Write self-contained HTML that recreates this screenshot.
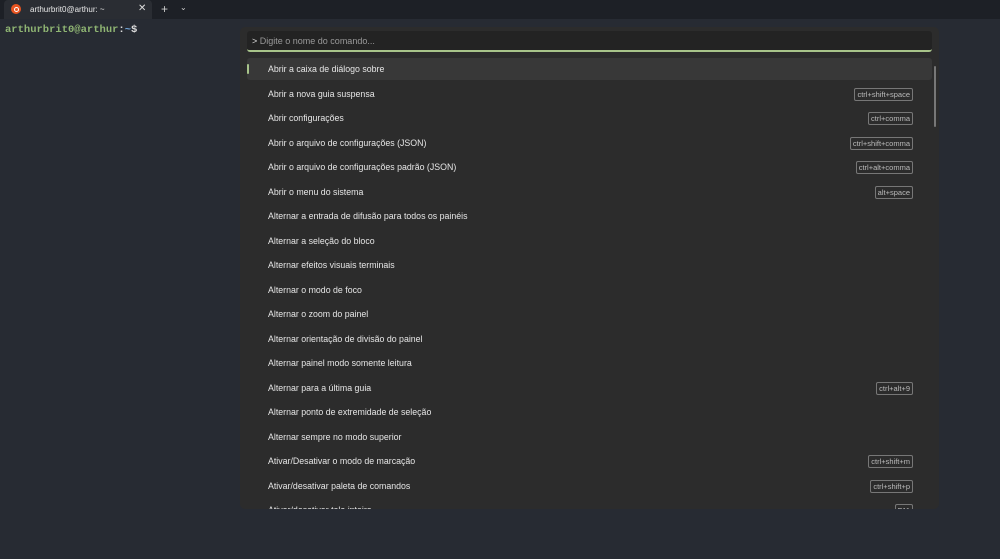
<!DOCTYPE html>
<html><head><meta charset="utf-8"><style>
*{margin:0;padding:0;box-sizing:border-box}
body{width:1000px;height:559px;background:#272b33;font-family:"Liberation Sans",sans-serif;overflow:hidden;position:relative}
.tabbar{position:absolute;left:0;top:0;width:1000px;height:19px;background:#1d2026}
.tab{position:absolute;left:4px;top:0;width:148px;height:19px;background:#2a2d33;border-radius:4px 4px 0 0}
.tab .ic{position:absolute;left:7px;top:4px;width:10px;height:10px;border-radius:50%;background:#e95420}
.tab .ic:after{content:"";position:absolute;left:2.5px;top:2.5px;width:3px;height:3px;border:1px solid #fff;border-radius:50%}
.tab .t{position:absolute;left:26px;top:5px;font-size:8px;color:#e8e8e8}
.tab .x{position:absolute;left:134px;top:3px;font-size:10px;color:#ddd}
.plus{position:absolute;left:161px;top:2px;color:#ccc;font-size:12px}
.chev{position:absolute;left:180px;top:3px;color:#ccc;font-size:8px}
.prompt{position:absolute;left:5px;top:24px;font-family:"Liberation Mono",monospace;font-weight:bold;font-size:10.5px;color:#8fb573}
.prompt .b{color:#6fa3d6}.prompt .w{color:#ddd}
.pal{position:absolute;left:240px;top:27px;width:699px;height:482px;background:#2c2c2c;border-radius:5px;overflow:hidden}
.inp{position:absolute;left:7px;top:4px;width:685px;height:21px;background:#232323;border-radius:3px;border-bottom:2px solid #a8c48a;font-size:9px;color:#999;padding:5px 5px}
.inp b{color:#ddd;font-weight:normal}
.row{position:absolute;left:7px;width:685px;height:22px;font-size:8.8px;color:#e6e6e6;padding:6px 0 0 21px}
.row.sel{background:#383838;border-radius:3px}
.row.sel:before{content:"";position:absolute;left:0;top:6px;width:2px;height:10px;background:#a8c48a;border-radius:1px}
.k{position:absolute;right:19px;top:5px;font-size:7.5px;color:#bbb;border:1px solid #777;border-radius:2px;padding:1px 2px;line-height:9px}
.sb{position:absolute;left:694px;top:39px;width:2px;height:61px;background:#777;border-radius:1px}
</style></head><body>
<div class="tabbar"><div class="tab"><div class="ic"></div><div class="t">arthurbrit0@arthur: ~</div><div class="x">✕</div></div><div class="plus">+</div><div class="chev">⌄</div></div>
<div class="prompt">arthurbrit0@arthur<span class="w">:</span><span class="b">~</span><span class="w">$</span></div>
<div class="pal">
<div class="inp"><b>&gt;</b> Digite o nome do comando...</div>
<div class="row sel" style="top:31px">Abrir a caixa de diálogo sobre</div>
<div class="row" style="top:55.5px">Abrir a nova guia suspensa<span class="k">ctrl+shift+space</span></div>
<div class="row" style="top:80px">Abrir configurações<span class="k">ctrl+comma</span></div>
<div class="row" style="top:104.5px">Abrir o arquivo de configurações (JSON)<span class="k">ctrl+shift+comma</span></div>
<div class="row" style="top:129px">Abrir o arquivo de configurações padrão (JSON)<span class="k">ctrl+alt+comma</span></div>
<div class="row" style="top:153.5px">Abrir o menu do sistema<span class="k">alt+space</span></div>
<div class="row" style="top:178px">Alternar a entrada de difusão para todos os painéis</div>
<div class="row" style="top:202.5px">Alternar a seleção do bloco</div>
<div class="row" style="top:227px">Alternar efeitos visuais terminais</div>
<div class="row" style="top:251.5px">Alternar o modo de foco</div>
<div class="row" style="top:276px">Alternar o zoom do painel</div>
<div class="row" style="top:300.5px">Alternar orientação de divisão do painel</div>
<div class="row" style="top:325px">Alternar painel modo somente leitura</div>
<div class="row" style="top:349.5px">Alternar para a última guia<span class="k">ctrl+alt+9</span></div>
<div class="row" style="top:374px">Alternar ponto de extremidade de seleção</div>
<div class="row" style="top:398.5px">Alternar sempre no modo superior</div>
<div class="row" style="top:423px">Ativar/Desativar o modo de marcação<span class="k">ctrl+shift+m</span></div>
<div class="row" style="top:447.5px">Ativar/desativar paleta de comandos<span class="k">ctrl+shift+p</span></div>
<div class="row" style="top:472px">Ativar/desativar tela inteira<span class="k">F11</span></div>
<div class="sb"></div>
</div>
</body></html>
